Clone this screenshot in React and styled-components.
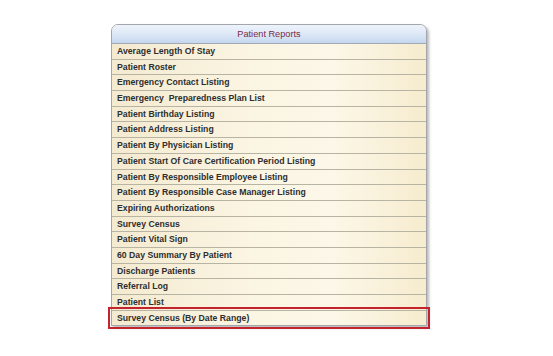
import React from 'react'
import styled, { createGlobalStyle } from 'styled-components'

const GlobalStyle = createGlobalStyle`
    html, body {
        margin: 0;
        padding: 0;
        background: #ffffff;
    }
    body {
        font-family: 'Liberation Sans', Arial, sans-serif;
    }
`;

const Page = styled.div`
    width: 553px;
    height: 356px;
    box-sizing: border-box;
    padding: 24px 0 0 111px;
`;

const Panel = styled.div`
    width: 314px;
    border: 1px solid #a3a6aa;
    border-radius: 7px 7px 0 0;
    box-shadow: 2px 2px 3px rgba(0, 0, 0, 0.28);
    background: #fdf8e8;
`;

const Header = styled.div`
    height: 18px;
    line-height: 18px;
    text-align: center;
    font-size: 9.2px;
    color: #7b2a44;
    border-radius: 6px 6px 0 0;
    border-bottom: 1px solid #9fa8b3;
    background: linear-gradient(to bottom, #eef3fb 0%, #dce7f6 55%, #c5d7ee 100%);
`;

const List = styled.div`
    display: flex;
    flex-direction: column;
`;

const Row = styled.div`
    position: relative;
    height: 14.7px;
    line-height: 14.7px;
    padding-left: 5px;
    font-size: 8.7px;
    font-weight: bold;
    color: #2e2e2e;
    white-space: nowrap;
    border-bottom: 1px solid #b8b4a4;
    background: linear-gradient(to right, #f4ead0 0%, #fbf5e3 45%, #fcf7e8 70%, #f6ecce 100%);
    cursor: pointer;
    &:last-child {
        border-bottom: none;
    }
    ${({ $selected }) => $selected && `
        outline: 2px solid #c3232d;
        outline-offset: 2px;
    `}
`;

const reports = [
    'Average Length Of Stay',
    'Patient Roster',
    'Emergency Contact Listing',
    'Emergency\u00a0 Preparedness Plan List',
    'Patient Birthday Listing',
    'Patient Address Listing',
    'Patient By Physician Listing',
    'Patient Start Of Care Certification Period Listing',
    'Patient By Responsible Employee Listing',
    'Patient By Responsible Case Manager Listing',
    'Expiring Authorizations',
    'Survey Census',
    'Patient Vital Sign',
    '60 Day Summary By Patient',
    'Discharge Patients',
    'Referral Log',
    'Patient List',
    'Survey Census (By Date Range)',
]

export default function App() {
    return (
        <>
            <GlobalStyle />
            <Page>
                <Panel>
                    <Header>Patient Reports</Header>
                    <List>
                        {reports.map((r, i) => (
                            <Row key={r} $selected={i === reports.length - 1}>{r}</Row>
                        ))}
                    </List>
                </Panel>
            </Page>
        </>
    )
}
